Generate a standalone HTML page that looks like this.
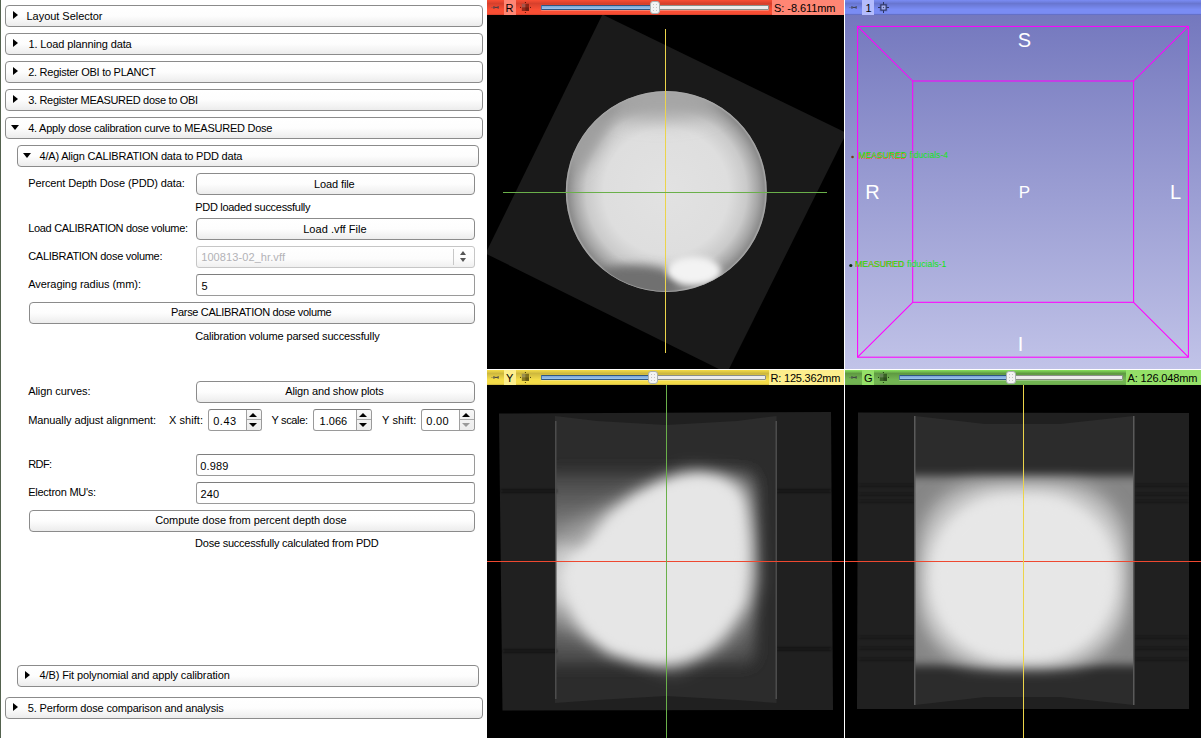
<!DOCTYPE html>
<html><head><meta charset="utf-8"><title>Slicer</title>
<style>
html,body{margin:0;padding:0;background:#fff;}
body{width:1201px;height:738px;position:relative;overflow:hidden;font-family:"Liberation Sans",sans-serif;font-size:11px;color:#000;}
.a{position:absolute;}
.t{position:absolute;white-space:nowrap;line-height:13px;height:13px;}
#edge{position:absolute;left:0;top:0;width:1px;height:738px;background:#53624e;}
.cb{position:absolute;height:20px;border:1px solid #8b8b8b;border-radius:4px;background:linear-gradient(#ffffff 0%,#fdfdfd 50%,#f3f3f3 80%,#ececec 100%);}
.tr{position:absolute;width:0;height:0;border-left:5.5px solid #000;border-top:4.5px solid transparent;border-bottom:4.5px solid transparent;}
.td{margin-left:-1px;position:absolute;width:0;height:0;border-top:5px solid #000;border-left:4.5px solid transparent;border-right:4.5px solid transparent;}
.btn{position:absolute;height:20px;border:1px solid #8b8b8b;border-radius:4px;background:linear-gradient(#ffffff 0%,#fdfdfd 50%,#f3f3f3 80%,#ececec 100%);}
.inp{position:absolute;height:20px;border:1px solid #9a9a9a;border-top-color:#7e7e7e;border-radius:3px;background:#fff;}
.sp{position:absolute;height:20px;width:52px;border:1px solid #9a9a9a;border-top-color:#7e7e7e;border-radius:3px;background:#fff;}
.sp i{position:absolute;right:0;top:0;width:14px;height:20px;border-left:1px solid #a0a0a0;background:linear-gradient(#f8f8f8 0,#f0f0f0 9px,#a8a8a8 9px,#a8a8a8 10px,#f2f2f2 10px,#ececec 100%);border-radius:0 3px 3px 0;}
.sp i:before{content:"";position:absolute;left:2px;top:3px;border-bottom:4.5px solid #000;border-left:4px solid transparent;border-right:4px solid transparent;}
.sp i:after{content:"";position:absolute;left:2px;top:12.5px;border-top:4.5px solid #000;border-left:4px solid transparent;border-right:4px solid transparent;}
.sp.dis i:after{border-top-color:#9a9a9a;}
.bar{position:absolute;height:15px;}
.lb{position:absolute;top:0;height:15px;}
.gr{position:absolute;top:5px;height:3px;border:1px solid #8a8e88;background:#ececec;border-radius:1px;box-shadow:0 1px 0 rgba(255,255,255,0.28);}
.gf{position:absolute;top:5px;height:3px;border:1px solid #2e5682;border-left-color:#4a76a8;background:linear-gradient(#7ca6d6,#9cc5ef);border-radius:1px;}
.hd{position:absolute;top:1px;width:8px;height:11px;border:1px solid #a8b0b0;border-radius:3px;background-color:#f3f3f3;background-image:radial-gradient(circle,#c4c4c4 0.5px,transparent 0.9px);background-size:3px 3px;background-position:1px 1px;}
.view{position:absolute;overflow:hidden;background:#000;}
.view svg{position:absolute;left:0;top:0;}
</style></head><body>
<div id="edge"></div>
<div class="cb" style="left:5px;top:5px;width:476px;"><i class="tr" style="left:7px;top:5px;"></i></div>
<div class="cb" style="left:5px;top:33px;width:476px;"><i class="tr" style="left:7px;top:5px;"></i></div>
<div class="cb" style="left:5px;top:61px;width:476px;"><i class="tr" style="left:7px;top:5px;"></i></div>
<div class="cb" style="left:5px;top:89px;width:476px;"><i class="tr" style="left:7px;top:5px;"></i></div>
<div class="cb" style="left:5px;top:117px;width:476px;"><i class="td" style="left:6px;top:7px;"></i></div>
<div class="cb" style="left:17px;top:145px;width:460px;"><i class="td" style="left:6px;top:7px;"></i></div>
<div class="cb" style="left:17px;top:665px;width:460px;"><i class="tr" style="left:7px;top:5px;"></i></div>
<div class="cb" style="left:5px;top:697px;width:476px;"><i class="tr" style="left:7px;top:5px;"></i></div>
<div class="btn" style="left:196px;top:173px;width:277px;"></div>
<div class="btn" style="left:196px;top:218px;width:277px;"></div>
<div class="inp" style="left:196px;top:246px;width:277px;height:20px;background:linear-gradient(#fff 0%,#fcfcfc 60%,#f0f0f0 100%);border-color:#c6c6c6;"><b class="a" style="left:256px;top:2px;width:1px;height:16px;background:#c8c8c8;"></b><b class="a" style="left:263px;top:4px;border-bottom:4px solid #555;border-left:3.5px solid transparent;border-right:3.5px solid transparent;"></b><b class="a" style="left:263px;top:11px;border-top:4px solid #555;border-left:3.5px solid transparent;border-right:3.5px solid transparent;"></b></div>
<div class="inp" style="left:196px;top:274px;width:277px;"></div>
<div class="btn" style="left:29px;top:302px;width:444px;"></div>
<div class="btn" style="left:196px;top:381px;width:277px;"></div>
<div class="sp" style="left:208px;top:409px;"><i></i></div>
<div class="sp" style="left:313px;top:409px;width:57px;"><i></i></div>
<div class="sp dis" style="left:421px;top:409px;"><i></i></div>
<div class="inp" style="left:196px;top:454px;width:277px;"></div>
<div class="inp" style="left:196px;top:482px;width:277px;"></div>
<div class="btn" style="left:29px;top:510px;width:444px;"></div>
<div class="a" style="left:487px;top:0;width:714px;height:738px;background:#fff;"></div>
<div class="bar" style="left:487px;top:0px;width:357px;background:linear-gradient(#f94e34 0,#d7402c 3.5px,#f94e34 9.5px,#f94e34 13.4px,#dc432d 14.2px,#dc432d 15px);"><div class="lb" style="left:17px;width:12px;background:#ff8674;"></div><svg class="a" style="left:3px;top:3px;" width="10" height="9" viewBox="0 0 10 9"><rect x="1" y="4.1" width="2.6" height="0.7" fill="#555560" opacity="0.55"/><rect x="3.4" y="3.1" width="1.1" height="2.7" fill="#3c3c46" opacity="0.9"/><rect x="4.5" y="3.9" width="3.3" height="1.1" fill="#3c3c46" opacity="0.9"/><rect x="7.6" y="3.1" width="1.1" height="2.6" fill="#3c3c46" opacity="0.9"/></svg><svg class="a" style="left:32px;top:1px;" width="13" height="13" viewBox="0 0 13 13"><rect x="2.8" y="2.8" width="7.2" height="7.2" fill="#5a140a" opacity="0.62"/><rect x="2.8" y="2.8" width="3.6" height="3.6" fill="#fff" opacity="0.22"/><rect x="6.4" y="6.4" width="3.6" height="3.6" fill="#000" opacity="0.25"/><g fill="#5a140a"><rect x="5.9" y="1" width="1" height="1"/><rect x="5.9" y="11" width="1" height="1"/><rect x="1" y="5.9" width="1" height="1"/><rect x="11" y="5.9" width="1" height="1"/></g></svg><div class="lb" style="left:285px;width:72px;background:#ff8674;"></div><div class="gr" style="left:54px;width:226px;"></div><div class="gf" style="left:54px;width:112px;"></div><div class="hd" style="left:163px;"></div></div>
<div class="bar" style="left:845px;top:0px;width:356px;background:linear-gradient(#7a8cf4 0,#6876d0 3.5px,#7a8cf4 9.5px,#7a8cf4 13.4px,#6470c8 14.2px,#6470c8 15px);"><div class="lb" style="left:17px;width:12px;background:#b4bcfd;"></div><svg class="a" style="left:3px;top:3px;" width="10" height="9" viewBox="0 0 10 9"><rect x="1" y="4.1" width="2.6" height="0.7" fill="#555560" opacity="0.55"/><rect x="3.4" y="3.1" width="1.1" height="2.7" fill="#3c3c46" opacity="0.9"/><rect x="4.5" y="3.9" width="3.3" height="1.1" fill="#3c3c46" opacity="0.9"/><rect x="7.6" y="3.1" width="1.1" height="2.6" fill="#3c3c46" opacity="0.9"/></svg><svg class="a" style="left:32px;top:1px;" width="13" height="13" viewBox="0 0 13 13"><rect x="2.6" y="2.6" width="7.8" height="7.8" fill="#303a78" opacity="0.28"/><rect x="3.9" y="3.9" width="5.2" height="5.2" fill="#a9b3f5" stroke="#2c335e" stroke-width="1.1"/><rect x="5.9" y="5.9" width="1.2" height="1.2" fill="#2c335e" opacity="0.8"/><g fill="#2c335e"><rect x="6" y="1" width="1" height="2.6"/><rect x="6" y="9.4" width="1" height="2.6"/><rect x="1" y="6" width="2.6" height="1"/><rect x="9.4" y="6" width="2.6" height="1"/></g></svg></div>
<div class="bar" style="left:487px;top:370px;width:357px;background:linear-gradient(#f4dc48 0,#ceb83e 3.5px,#f4dc48 9.5px,#f4dc48 13.4px,#d6be40 14.2px,#d6be40 15px);"><div class="lb" style="left:17px;width:12px;background:#fdee8c;"></div><svg class="a" style="left:3px;top:3px;" width="10" height="9" viewBox="0 0 10 9"><rect x="1" y="4.1" width="2.6" height="0.7" fill="#555560" opacity="0.55"/><rect x="3.4" y="3.1" width="1.1" height="2.7" fill="#3c3c46" opacity="0.9"/><rect x="4.5" y="3.9" width="3.3" height="1.1" fill="#3c3c46" opacity="0.9"/><rect x="7.6" y="3.1" width="1.1" height="2.6" fill="#3c3c46" opacity="0.9"/></svg><svg class="a" style="left:32px;top:1px;" width="13" height="13" viewBox="0 0 13 13"><rect x="2.8" y="2.8" width="7.2" height="7.2" fill="#4a400a" opacity="0.62"/><rect x="2.8" y="2.8" width="3.6" height="3.6" fill="#fff" opacity="0.22"/><rect x="6.4" y="6.4" width="3.6" height="3.6" fill="#000" opacity="0.25"/><g fill="#4a400a"><rect x="5.9" y="1" width="1" height="1"/><rect x="5.9" y="11" width="1" height="1"/><rect x="1" y="5.9" width="1" height="1"/><rect x="11" y="5.9" width="1" height="1"/></g></svg><div class="lb" style="left:282px;width:75px;background:#fdee8c;"></div><div class="gr" style="left:54px;width:223px;"></div><div class="gf" style="left:54px;width:110px;"></div><div class="hd" style="left:161px;"></div></div>
<div class="bar" style="left:845px;top:370px;width:356px;background:linear-gradient(#88e25c 0,#5f9a42 3.5px,#72b452 9.5px,#72b452 13.4px,#68a64a 14.2px,#68a64a 15px);"><div class="lb" style="left:17px;width:12px;background:#94e068;"></div><svg class="a" style="left:3px;top:3px;" width="10" height="9" viewBox="0 0 10 9"><rect x="1" y="4.1" width="2.6" height="0.7" fill="#555560" opacity="0.55"/><rect x="3.4" y="3.1" width="1.1" height="2.7" fill="#3c3c46" opacity="0.9"/><rect x="4.5" y="3.9" width="3.3" height="1.1" fill="#3c3c46" opacity="0.9"/><rect x="7.6" y="3.1" width="1.1" height="2.6" fill="#3c3c46" opacity="0.9"/></svg><svg class="a" style="left:32px;top:1px;" width="13" height="13" viewBox="0 0 13 13"><rect x="2.8" y="2.8" width="7.2" height="7.2" fill="#1e3a10" opacity="0.62"/><rect x="2.8" y="2.8" width="3.6" height="3.6" fill="#fff" opacity="0.22"/><rect x="6.4" y="6.4" width="3.6" height="3.6" fill="#000" opacity="0.25"/><g fill="#1e3a10"><rect x="5.9" y="1" width="1" height="1"/><rect x="5.9" y="11" width="1" height="1"/><rect x="1" y="5.9" width="1" height="1"/><rect x="11" y="5.9" width="1" height="1"/></g></svg><div class="lb" style="left:281px;width:75px;background:#94e068;"></div><div class="gr" style="left:54px;width:222px;"></div><div class="gf" style="left:54px;width:110px;"></div><div class="hd" style="left:161px;"></div></div>
<div class="view" id="vR" style="left:487px;top:15px;width:357px;height:354px;">
<svg width="357" height="354" viewBox="0 0 357 354">
<defs>
<filter id="b1" filterUnits="userSpaceOnUse" x="-40" y="-40" width="440" height="440"><feGaussianBlur stdDeviation="0.8"/></filter>
<filter id="b3" filterUnits="userSpaceOnUse" x="-40" y="-40" width="440" height="440"><feGaussianBlur stdDeviation="3"/></filter>
<filter id="b5" filterUnits="userSpaceOnUse" x="-40" y="-40" width="440" height="440"><feGaussianBlur stdDeviation="5"/></filter>
<filter id="b8" filterUnits="userSpaceOnUse" x="-40" y="-40" width="440" height="440"><feGaussianBlur stdDeviation="8"/></filter>
<filter id="b12" filterUnits="userSpaceOnUse" x="-40" y="-40" width="440" height="440"><feGaussianBlur stdDeviation="12"/></filter>
<radialGradient id="rgR" cx="179.3" cy="176.5" r="100.5" gradientUnits="userSpaceOnUse"><stop offset="0" stop-color="#e2e2e2"/><stop offset="0.62" stop-color="#dedede"/><stop offset="0.8" stop-color="#cacaca"/><stop offset="0.91" stop-color="#a6a6a6"/><stop offset="0.975" stop-color="#8c8c8c"/><stop offset="1" stop-color="#a8a8a8"/></radialGradient>
<clipPath id="cR"><circle cx="179.3" cy="176.5" r="100"/></clipPath>
</defs>
<polygon points="115.4,-0.5 359.5,118 240,358 -1.5,238.5" fill="#1a1a1a"/>
<circle cx="179.3" cy="176.5" r="100.5" fill="url(#rgR)"/>
<g clip-path="url(#cR)">
<ellipse cx="174" cy="80" rx="66" ry="24" fill="#a6a6a6" filter="url(#b10)"/>
<ellipse cx="100" cy="120" rx="14" ry="40" fill="#a0a0a0" filter="url(#b8)" transform="rotate(28 100 120)"/>
<ellipse cx="148" cy="268" rx="46" ry="18" fill="#707070" filter="url(#b5)"/>
<ellipse cx="238" cy="266" rx="28" ry="13" fill="#909090" filter="url(#b5)"/>
<ellipse cx="207" cy="256" rx="27" ry="14" fill="#f3f3f3" filter="url(#b3)"/>
</g>
<circle cx="179.3" cy="176.5" r="100" fill="none" stroke="#b4b4b4" stroke-width="1" opacity="0.35"/>
<rect x="178" y="14" width="1" height="324" fill="#ecd44a"/>
<rect x="16" y="177" width="324" height="1" fill="#6ab04a"/>
</svg></div>

<div class="view" id="v3" style="left:845px;top:15px;width:356px;height:354px;background:linear-gradient(#7478be,#c1c3e8);">
<svg width="356" height="354" viewBox="0 0 356 354" style="font-family:'Liberation Sans',sans-serif;">
<g fill="none" stroke="#ff00ff" stroke-width="1.05">
<rect x="12.6" y="11.4" width="330.8" height="330.8"/>
<rect x="67.7" y="66" width="220.9" height="221.3"/>
<path d="M12.6 11.4L67.7 66M343.4 11.4L288.6 66M12.6 342.2L67.7 287.3M343.4 342.2L288.6 287.3"/>
</g>
<g fill="#fff" text-anchor="middle">
<text x="179.5" y="32" font-size="20">S</text>
<text x="27.5" y="184" font-size="20">R</text>
<text x="179.5" y="182.5" font-size="17">P</text>
<text x="330.5" y="184" font-size="20">L</text>
<text x="175.5" y="336" font-size="20">I</text>
</g>
<circle cx="7.5" cy="142" r="1.3" fill="#7a3a1a"/>
<circle cx="5.8" cy="250.5" r="1.6" fill="#0a2a0a"/>
<text x="13.5" y="143.6" font-size="9" fill="#f06030" textLength="48" lengthAdjust="spacingAndGlyphs">MEASURED</text>
<text x="13.5" y="143" font-size="9" fill="#12e612" textLength="89.5" lengthAdjust="spacingAndGlyphs">MEASURED fiducials-4</text>
<text x="10" y="252.1" font-size="9" fill="#f06030" textLength="49" lengthAdjust="spacingAndGlyphs">MEASURED</text>
<text x="10" y="251.5" font-size="9" fill="#12e612" textLength="91.5" lengthAdjust="spacingAndGlyphs">MEASURED fiducials-1</text>
</svg></div>

<div class="view" id="vY" style="left:487px;top:385px;width:357px;height:353px;">
<svg width="357" height="353" viewBox="0 0 357 353">
<defs><clipPath id="cY"><rect x="68" y="31" width="221.5" height="287"/></clipPath>
<linearGradient id="lgY" x1="0" y1="86" x2="0" y2="280" gradientUnits="userSpaceOnUse"><stop offset="0" stop-color="#404040"/><stop offset="0.3" stop-color="#7c7c7c"/><stop offset="0.72" stop-color="#7c7c7c"/><stop offset="1" stop-color="#444444"/></linearGradient>
<filter id="b7" filterUnits="userSpaceOnUse" x="-40" y="-40" width="440" height="440"><feGaussianBlur stdDeviation="7"/></filter>
<filter id="b10" filterUnits="userSpaceOnUse" x="-40" y="-40" width="440" height="440"><feGaussianBlur stdDeviation="10"/></filter>
</defs>
<polygon points="12,28.5 344,27 346,325 15.5,325.5" fill="#202020"/>
<polygon points="68,31 110,36 179,40 250,36 289.5,31 289.5,318 250,315 179,311 110,315 68,318" fill="#2c2c2c"/>
<g clip-path="url(#cY)">
<rect x="56" y="86" width="212" height="194" rx="10" fill="url(#lgY)" filter="url(#b7)"/>
<polygon points="50,160 120,124 200,88 262,95 268,200 240,258 185,284 120,258 50,228" fill="#a4a4a4" filter="url(#b10)"/>
<ellipse cx="78" cy="190" rx="24" ry="30" fill="#c6c6c6" filter="url(#b7)"/>
<polygon points="215,88 235,92 249,101 257,113 260,130 263,160 263,190 259,218 248,236 238,249 228,259 216,268 198,276 173,280 150,277 121,268 100,251 88,236 80,221 74,206 71,190 78,174 99,157 121,129 148,109 172,97 195,90" fill="#e2e2e2" filter="url(#b7)"/>
<polygon points="210.7,97 229.2,100.1 242.1,108.2 249.2,119.3 251.4,135.1 253.3,162.4 253,189.2 249.7,214.3 239.7,230.4 230.8,242 221.9,251.1 211.2,259.2 195.1,266.4 172.7,270 152.1,267.2 126,259.3 107.2,244 96.4,230.6 89.2,217.1 83.7,203.7 81,189.3 88,175 108.4,160.4 127.7,136.4 150.8,118.6 171.8,107 192.4,99.7" fill="#e6e6e6" filter="url(#b5)"/>
</g>
<g fill="#0a0a0a" opacity="0.6" filter="url(#b1)"><rect x="14" y="104.5" width="56" height="3"/><rect x="290" y="104.5" width="54" height="3"/><rect x="16" y="264.5" width="54" height="3"/><rect x="290" y="262.5" width="54" height="3"/></g>
<rect x="68" y="36" width="1.5" height="278" fill="#4c4c4c"/>
<rect x="288.5" y="36" width="1.5" height="278" fill="#4c4c4c"/>
<rect x="0" y="176" width="357" height="1" fill="#ee4830"/>
<rect x="179" y="0" width="1" height="353" fill="#6ab04a"/>
</svg></div>

<div class="view" id="vG" style="left:845px;top:385px;width:356px;height:353px;">
<svg width="356" height="353" viewBox="0 0 356 353">
<defs><clipPath id="cG"><polygon points="70,31 140,41 215,41 288.5,31 288.5,320 215,311 140,311 70,320"/></clipPath></defs>
<polygon points="13,27.5 344,28 344,324 12,324" fill="#202020"/>
<polygon points="70,31 140,39 215,39 288.5,31 288.5,320 215,312 140,312 70,320" fill="#2c2c2c"/>
<g clip-path="url(#cG)">
<rect x="60" y="91" width="238" height="189" rx="4" fill="#868686" filter="url(#b5)"/>
<rect x="74" y="98" width="208" height="182" rx="62" fill="#b8b8b8" filter="url(#b8)"/>
<rect x="80" y="105" width="196" height="174" rx="84" fill="#e4e4e4" filter="url(#b8)"/>
<rect x="91" y="115" width="174" height="156" rx="76" fill="#e7e7e7" filter="url(#b5)"/>
</g>
<g fill="#0a0a0a" opacity="0.4" filter="url(#b1)"><rect x="14" y="99" width="55" height="2.5"/><rect x="14" y="108" width="55" height="2.5"/><rect x="14" y="115" width="55" height="2.5"/><rect x="290" y="99" width="54" height="2.5"/><rect x="290" y="108" width="54" height="2.5"/><rect x="290" y="115" width="54" height="2.5"/><rect x="14" y="251" width="55" height="2.5"/><rect x="14" y="262" width="55" height="2.5"/><rect x="14" y="273" width="55" height="2.5"/><rect x="290" y="251" width="54" height="2.5"/><rect x="290" y="262" width="54" height="2.5"/><rect x="290" y="273" width="54" height="2.5"/></g>
<rect x="69" y="31" width="1.5" height="289" fill="#5a5a5a"/>
<rect x="288" y="31" width="1.5" height="289" fill="#5a5a5a"/>
<rect x="0" y="176" width="356" height="1" fill="#ee4830"/>
<rect x="178" y="0" width="1" height="353" fill="#ecd44a"/>
</svg></div>
<span class="t" style="left:26.5px;top:10px;letter-spacing:-0.031px;">Layout Selector</span>
<span class="t" style="left:28.5px;top:38px;letter-spacing:-0.131px;">1. Load planning data</span>
<span class="t" style="left:28.2px;top:66px;letter-spacing:-0.266px;">2. Register OBI to PLANCT</span>
<span class="t" style="left:28.2px;top:94px;letter-spacing:-0.320px;">3. Register MEASURED dose to OBI</span>
<span class="t" style="left:28.2px;top:122px;letter-spacing:-0.240px;">4. Apply dose calibration curve to MEASURED Dose</span>
<span class="t" style="left:39.5px;top:150px;letter-spacing:-0.188px;">4/A) Align CALIBRATION data to PDD data</span>
<span class="t" style="left:28.2px;top:177px;letter-spacing:-0.127px;">Percent Depth Dose (PDD) data:</span>
<span class="t" style="left:314.0px;top:178px;letter-spacing:-0.112px;">Load file</span>
<span class="t" style="left:195.2px;top:201px;letter-spacing:-0.290px;">PDD loaded successfully</span>
<span class="t" style="left:28.2px;top:222px;letter-spacing:-0.312px;">Load CALIBRATION dose volume:</span>
<span class="t" style="left:303.2px;top:223px;letter-spacing:0.055px;">Load .vff File</span>
<span class="t" style="left:28.2px;top:250px;letter-spacing:-0.292px;">CALIBRATION dose volume:</span>
<span class="t" style="left:201.2px;top:251px;letter-spacing:0.095px;color:#b2b2b6;">100813-02_hr.vff</span>
<span class="t" style="left:28.2px;top:278px;letter-spacing:-0.063px;">Averaging radius (mm):</span>
<span class="t" style="left:201.5px;top:280px;letter-spacing:0.000px;">5</span>
<span class="t" style="left:171.0px;top:306px;letter-spacing:-0.323px;">Parse CALIBRATION dose volume</span>
<span class="t" style="left:195.2px;top:330px;letter-spacing:-0.153px;">Calibration volume parsed successfully</span>
<span class="t" style="left:28.2px;top:385px;letter-spacing:-0.057px;">Align curves:</span>
<span class="t" style="left:285.2px;top:385px;letter-spacing:-0.127px;">Align and show plots</span>
<span class="t" style="left:28.2px;top:414px;letter-spacing:-0.094px;">Manually adjust alignment:</span>
<span class="t" style="left:169.0px;top:414px;letter-spacing:0.054px;">X shift:</span>
<span class="t" style="left:213.2px;top:415px;letter-spacing:0.526px;">0.43</span>
<span class="t" style="left:271.5px;top:414px;letter-spacing:-0.348px;">Y scale:</span>
<span class="t" style="left:319.5px;top:415px;letter-spacing:0.042px;">1.066</span>
<span class="t" style="left:382.0px;top:414px;letter-spacing:0.109px;">Y shift:</span>
<span class="t" style="left:426.2px;top:415px;letter-spacing:0.359px;">0.00</span>
<span class="t" style="left:28.2px;top:458px;letter-spacing:-0.557px;">RDF:</span>
<span class="t" style="left:200.2px;top:460px;letter-spacing:0.192px;">0.989</span>
<span class="t" style="left:28.2px;top:486px;letter-spacing:-0.245px;">Electron MU's:</span>
<span class="t" style="left:200.5px;top:488px;letter-spacing:0.170px;">240</span>
<span class="t" style="left:155.2px;top:514px;letter-spacing:-0.067px;">Compute dose from percent depth dose</span>
<span class="t" style="left:195.1px;top:537px;letter-spacing:-0.232px;">Dose successfully calculated from PDD</span>
<span class="t" style="left:39.5px;top:669px;letter-spacing:-0.119px;">4/B) Fit polynomial and apply calibration</span>
<span class="t" style="left:27.8px;top:702px;letter-spacing:-0.168px;">5. Perform dose comparison and analysis</span>
<span class="t" style="left:505.5px;top:2px;letter-spacing:0.000px;">R</span>
<span class="t" style="left:774.1px;top:2px;letter-spacing:-0.076px;">S: -8.611mm</span>
<span class="t" style="left:865.5px;top:2px;letter-spacing:0.000px;">1</span>
<span class="t" style="left:506.0px;top:372px;letter-spacing:0.000px;">Y</span>
<span class="t" style="left:770.5px;top:372px;letter-spacing:-0.196px;">R: 125.362mm</span>
<span class="t" style="left:864.0px;top:372px;letter-spacing:0.000px;">G</span>
<span class="t" style="left:1127.5px;top:372px;letter-spacing:-0.141px;">A: 126.048mm</span>
</body></html>
